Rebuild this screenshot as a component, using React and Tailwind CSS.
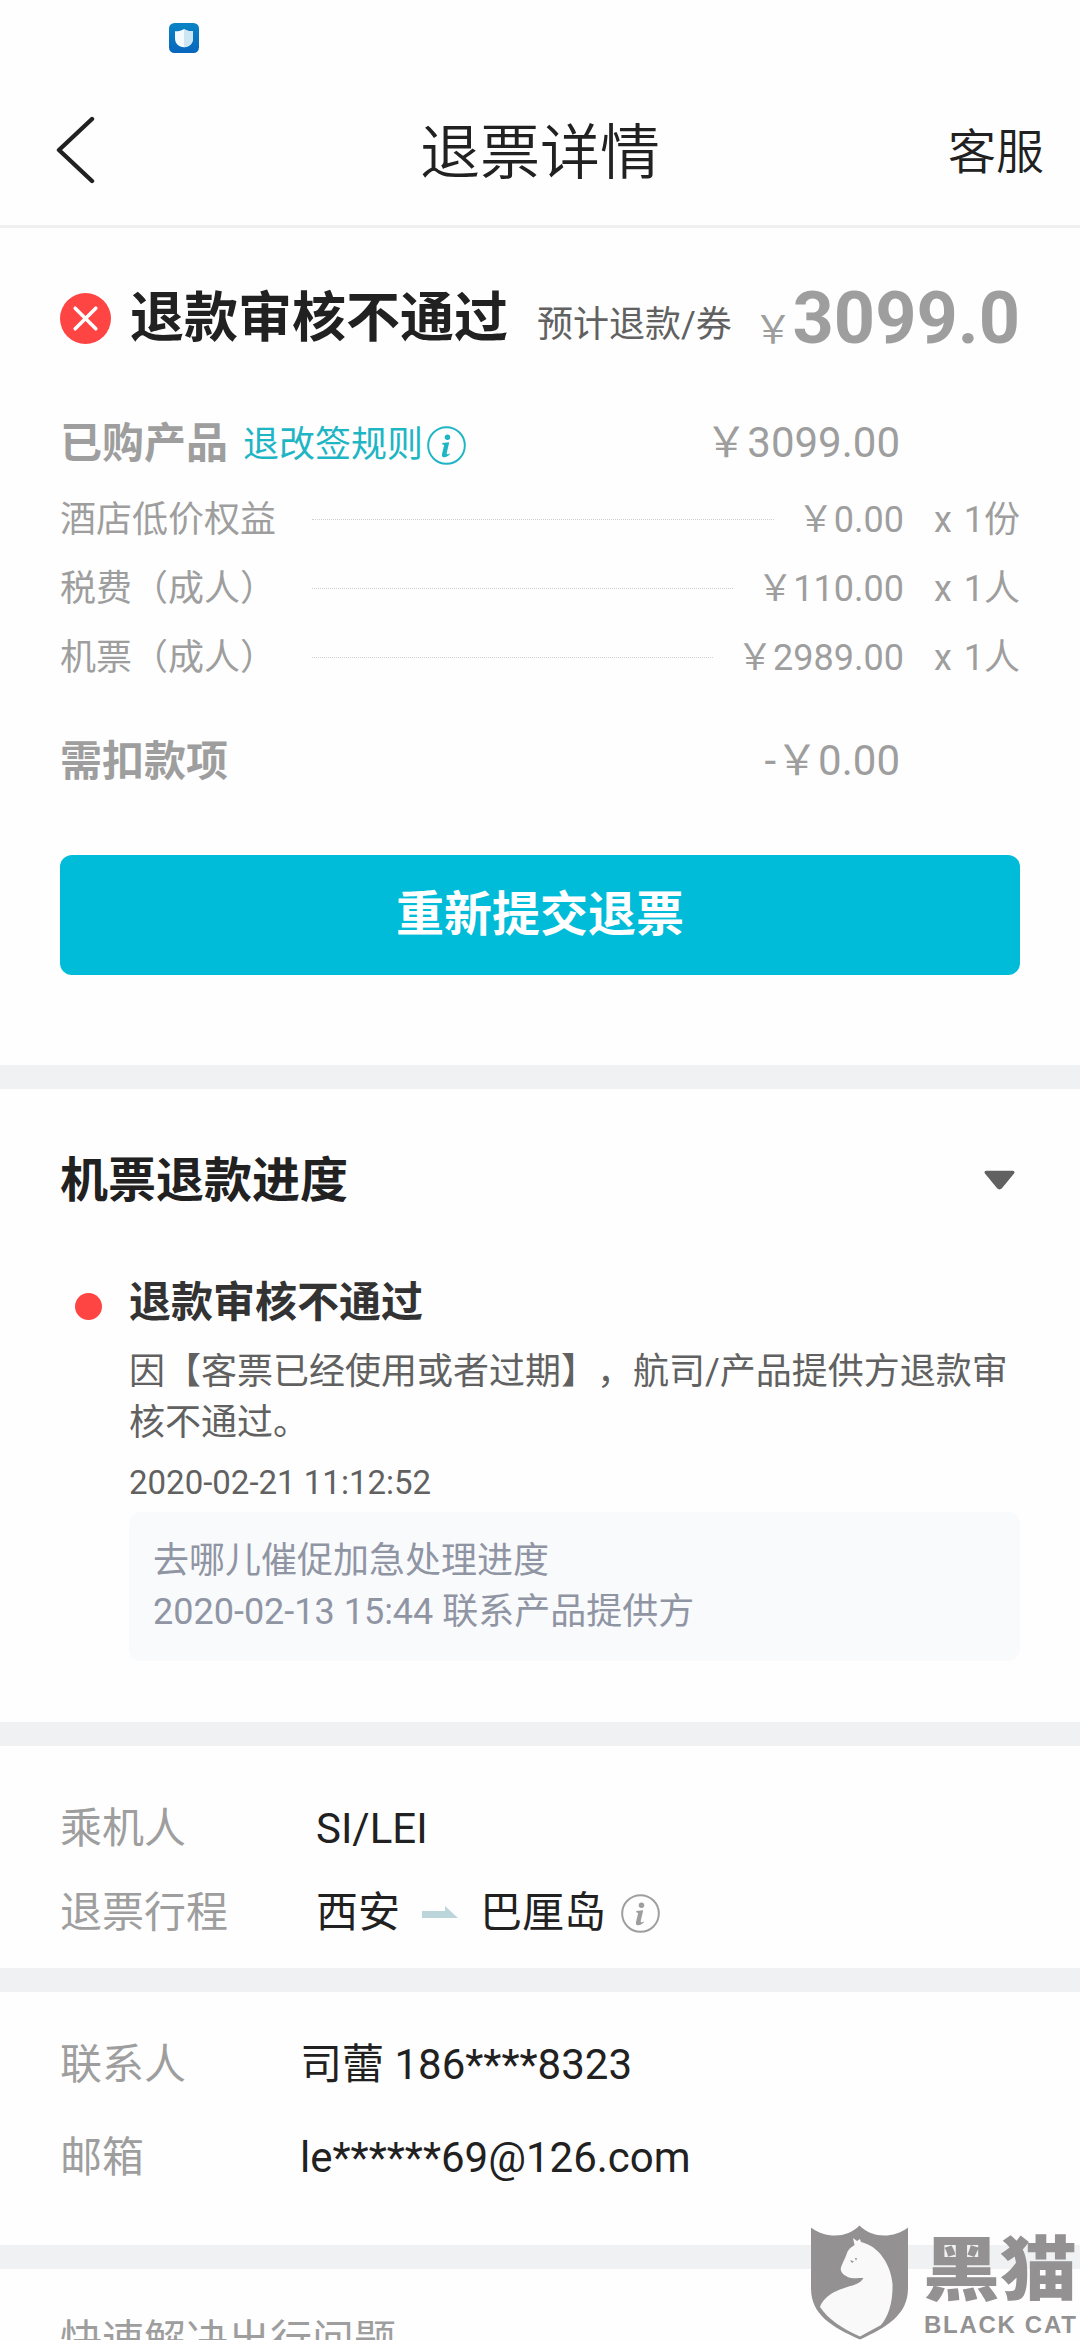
import React from 'react';

const fees = [
  { name: '酒店低价权益', price: '￥0.00', count: 'x 1份' },
  { name: '税费（成人）', price: '￥110.00', count: 'x 1人' },
  { name: '机票（成人）', price: '￥2989.00', count: 'x 1人' },
];

const InfoIcon = ({ className }) => (
  <svg viewBox="0 0 40 40" className={className} fill="none">
    <circle cx="20" cy="20" r="18.8" stroke="currentColor" strokeWidth="2" />
    <circle cx="21" cy="11.6" r="2.8" fill="currentColor" />
    <path d="M15.6 17.400l7.200-.8-2.600 11.400c-.2 1.200.7 1.400 3 .1l.4.9c-2.400 2.400-4.700 3.300-6.400 3-1.700-.3-2.200-1.600-1.800-3.400l2.200-9.200-2-.6z" fill="currentColor" />
  </svg>
);

const Divider = () => <div className="h-6 shrink-0 bg-[#f0f1f3]" />;

const ShieldApp = () => (
  <svg viewBox="0 0 30 30" className="size-[30px]">
    <defs>
      <linearGradient id="app" x1="0" y1="0" x2="0" y2="1">
        <stop offset="0" stopColor="#0a84c4" />
        <stop offset="1" stopColor="#0866bd" />
      </linearGradient>
    </defs>
    <rect width="30" height="30" rx="5.500" fill="url(#app)" />
    <path d="M15 6c2.500 1.700 5.500 2.400 9 2.300v7.200c0 5-4 8.700-9 8.700s-9-3.700-9-8.700V8.300C9.500 8.400 12.500 7.700 15 6z" fill="#f4fafd" />
    <path d="M15 6c2.500 1.700 5.500 2.400 9 2.300v7.200c0 5-4 8.700-9 8.700z" fill="#cde6f3" />
  </svg>
);

const BlackCat = () => (
  <div className="absolute top-[2224px] left-[811px] flex h-[116px] w-[269px] text-[#939192]">
    <svg viewBox="0 0 97 116" className="h-[116px] w-[97px] shrink-0">
      <path d="M0 3.500C15 15 37 14 48.500 1.500C60 14 82 15 97 3.500V64C97 91 76 103 49 115.500C21 103 0 91 0 64z" fill="currentColor" />
      <path d="M42 14l4 3 3-2 1 3C68 22 80 41 81.500 60C82 77 78 92 70 101L49 112.500C30 104 17 95 9 83C15 68 33 64 43 61C48 59 51 57 52.500 54C46 53.500 42 55 38 53.500C32 51 28 47 30.500 42C33 36 35 32 36 29C38 24 41 23 43.500 21z" fill="#ffffff" fillOpacity="0.95" />
      <path d="M39 36l4 1.500-2 1.500zM44 34l2 0-1 3z" fill="currentColor" />
    </svg>
    <div className="ml-[15px] flex flex-col whitespace-nowrap">
      <div className="h-[87px] origin-center scale-y-[0.91] font-['Noto_Sans_CJK_SC',sans-serif] text-[77px] leading-[81px] font-black">黑猫</div>
      <div className="pl-[1px] font-['Liberation_Sans',sans-serif] text-[24px] leading-[28px] font-bold tracking-[1.7px]">BLACK CAT</div>
    </div>
  </div>
);

const App = () => {
  return (
    <div className="relative flex h-[2340px] w-[1080px] flex-col overflow-hidden bg-[#fefefe] font-[Roboto,'Noto_Sans_CJK_SC',sans-serif] text-[#212121]">
      {/* Status bar */}
      <div className="h-[78px] shrink-0 pt-[23px] pl-[169px]">
        <ShieldApp />
      </div>

      {/* Header */}
      <header className="flex h-[150px] shrink-0 items-center border-b-3 border-[#f0f0f0] px-9">
        <div className="flex-1">
          <svg viewBox="0 0 40 68" className="mb-1 ml-[19px] h-[68px] w-10" fill="none" stroke="#212121" strokeWidth="4.400" strokeLinecap="round" strokeLinejoin="round">
            <path d="M37 3L4 34l33 31" />
          </svg>
        </div>
        <h1 className="pt-1 text-[60px] leading-[80px] font-[350]">退票详情</h1>
        <div className="flex-1 pt-[3px] text-right text-[48px] leading-[80px] font-[350]">客服</div>
      </header>

      {/* Refund summary */}
      <section className="flex h-[837px] shrink-0 flex-col px-[60px] pt-[50px] text-[#9e9e9e]">
        <div className="flex h-[80px] items-center">
          <svg viewBox="0 0 52 52" className="size-[51px]">
            <circle cx="26" cy="26" r="26" fill="#ff4444" />
            <path d="M15.500 15.500l21 21M36.500 15.500l-21 21" stroke="#fff" strokeWidth="3.600" strokeLinecap="round" />
          </svg>
          <h2 className="ml-[19px] pt-[2px] text-[54px] leading-[80px] font-bold text-[#212121]">退款审核不通过</h2>
          <div className="flex flex-1 items-baseline justify-between pl-[29px]">
            <span className="text-[36px] text-[#616161]">预计退款/券</span>
            <span className="translate-y-[6px] text-[72px] leading-[80px] font-bold"><span className="text-[39px] font-normal">￥</span>3099.0</span>
          </div>
        </div>

        <div className="mt-[54px] flex h-[60px] items-center">
          <span className="pt-[2px] text-[42px] font-bold">已购产品</span>
          <span className="ml-[15px] pt-[6px] text-[36px] text-[#1eb5c4]">退改签规则</span>
          <InfoIcon className="mt-[6px] ml-1 size-[39px] text-[#1eb5c4]" />
          <span className="mr-[120px] ml-auto text-[42px]">￥3099.00</span>
        </div>

        <div className="mt-[13px]">
          {fees.map((fee) => (
            <div key={fee.name} className="flex h-[69px] items-center text-[36px]">
              <span className="w-[252px]">{fee.name}</span>
              <span className="flex-1 border-t border-dotted border-[#d0d0d0]" />
              <span className="ml-6">{fee.price}</span>
              <span className="ml-[30px] [word-spacing:3px]">{fee.count}</span>
            </div>
          ))}
        </div>

        <div className="mt-[38px] flex h-[60px] items-center justify-between pr-[120px] text-[42px]">
          <span className="pt-[2px] font-bold">需扣款项</span>
          <span>-￥0.00</span>
        </div>

        <button className="mt-[65px] h-[120px] shrink-0 rounded-[12px] bg-[#00bcd8] text-[48px] font-bold text-white">重新提交退票</button>
      </section>

      <Divider />

      {/* Progress */}
      <section className="h-[633px] shrink-0 px-[60px] pt-[56px]">
        <div className="flex h-[70px] items-center justify-between">
          <h2 className="pt-[2px] text-[48px] font-bold">机票退款进度</h2>
          <svg viewBox="0 0 32 20" className="mr-[5px] h-5 w-[31px]">
            <path d="M2.500.5h27c2 0 2.500 1.500 1.500 2.900L18.500 18.500c-1.400 1.600-3.600 1.600-5 0L1 3.400C0 2 .5.5 2.500.5z" fill="#616161" />
          </svg>
        </div>
        <div className="mt-[56px] flex">
          <div className="mt-[22px] ml-[15px] size-[27px] shrink-0 rounded-full bg-[#ff4444]" />
          <div className="ml-[27px] flex-1">
            <h3 className="text-[42px] leading-[63px] font-bold text-[#333333]">退款审核不通过</h3>
            <p className="mt-[13px] text-[36px] leading-[51px] text-[#616161] [text-spacing-trim:space-all]">因【客票已经使用或者过期】，航司/产品提供方退款审核不通过。</p>
            <p className="mt-[10px] text-[33px] leading-[48px] text-[#616161]">2020-02-21 11:12:52</p>
            <div className="mt-[5px] h-[149px] rounded-[12px] bg-[#f9fafc] px-6 pt-6 text-[36px] leading-[51px] text-[#9095a4]">
              <p>去哪儿催促加急处理进度</p>
              <p>2020-02-13 15:44 联系产品提供方</p>
            </div>
          </div>
        </div>
      </section>

      <Divider />

      {/* Passenger */}
      <section className="h-[222px] shrink-0 px-[60px] pt-[41px] text-[42px] leading-[84px]">
        <div className="flex">
          <span className="w-[256px] text-[#9e9e9e]">乘机人</span>
          <span>SI/LEI</span>
        </div>
        <div className="flex items-center">
          <span className="w-[256px] text-[#9e9e9e]">退票行程</span>
          <span>西安</span>
          <svg viewBox="0 0 36 14" className="mx-[22px] h-[14px] w-9">
            <path d="M0 5h23V0l13 12H0z" fill="#bcd5da" />
          </svg>
          <span>巴厘岛</span>
          <InfoIcon className="ml-[15px] size-[39px] text-[#9e9e9e]" />
        </div>
      </section>

      <Divider />

      {/* Contact */}
      <section className="h-[253px] shrink-0 px-[60px] pt-[26px] text-[42px] leading-[93px]">
        <div className="flex">
          <span className="w-[240px] text-[#9e9e9e]">联系人</span>
          <span>司蕾 186****8323</span>
        </div>
        <div className="flex">
          <span className="w-[240px] text-[#9e9e9e]">邮箱</span>
          <span>le******69@126.com</span>
        </div>
      </section>

      <Divider />

      <section className="px-[60px] pt-[40px] text-[42px] leading-[63px] text-[#9e9e9e]">快速解决出行问题</section>

      <BlackCat />
    </div>
  );
};

export default App;
